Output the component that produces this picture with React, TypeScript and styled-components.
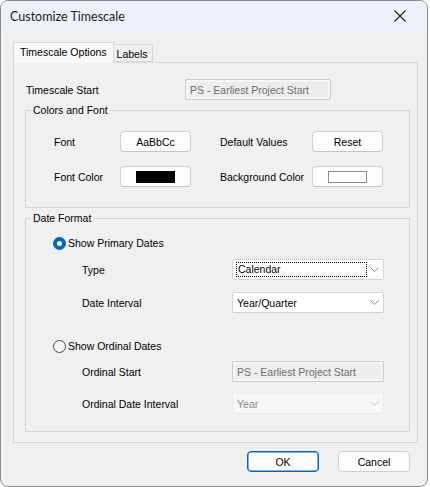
import { createGlobalStyle, styled } from 'styled-components';

const GlobalStyle = createGlobalStyle`
  html, body {
    margin: 0;
    padding: 0;
    background: #ffffff;
  }
  * {
    box-sizing: border-box;
  }
`;

export default function App() {
  return (
    <>
      <GlobalStyle />
      <Window>
        <TitleBar>
          <Title>Customize Timescale</Title>
          <CloseButton aria-label="Close">
            <svg width="12" height="12" viewBox="0 0 12 12">
              <path d="M0.5 0.5 L11.5 11.5 M11.5 0.5 L0.5 11.5" stroke="#1b1b1b" strokeWidth="1.1" />
            </svg>
          </CloseButton>
        </TitleBar>

        <Body>
          <TabStrip>
            <Tab $active>Timescale Options</Tab>
            <Tab>Labels</Tab>
          </TabStrip>

          <Panel>
            <StartRow>
              <StartLabel>Timescale Start</StartLabel>
              <TextField $width={146}>PS - Earliest Project Start</TextField>
            </StartRow>

            <Group $top={4}>
              <Legend>Colors and Font</Legend>
              <ColorGrid>
                <Label>Font</Label>
                <PushButton>AaBbCc</PushButton>
                <Label>Default Values</Label>
                <PushButton>Reset</PushButton>
                <Label>Font Color</Label>
                <PushButton>
                  <Swatch $color="#000000" $border="#000000" />
                </PushButton>
                <Label>Background Color</Label>
                <PushButton>
                  <Swatch $color="#ffffff" $border="#8a8a8a" />
                </PushButton>
              </ColorGrid>
            </Group>

            <Group $top={4}>
              <Legend>Date Format</Legend>
              <DateBody>
                <RadioRow $top={0}>
                  <Radio $checked />
                  <span>Show Primary Dates</span>
                </RadioRow>
                <FieldRow $top={9}>
                  <Label>Type</Label>
                  <Combo>
                    <FocusText>Calendar</FocusText>
                    <Chevron />
                  </Combo>
                </FieldRow>
                <FieldRow $top={12}>
                  <Label>Date Interval</Label>
                  <Combo>
                    <ComboText>Year/Quarter</ComboText>
                    <Chevron />
                  </Combo>
                </FieldRow>

                <RadioRow $top={26}>
                  <Radio />
                  <span>Show Ordinal Dates</span>
                </RadioRow>
                <FieldRow $top={8}>
                  <Label>Ordinal Start</Label>
                  <TextField $width={152}>PS - Earliest Project Start</TextField>
                </FieldRow>
                <FieldRow $top={11}>
                  <Label>Ordinal Date Interval</Label>
                  <Combo $disabled>
                    <ComboText>Year</ComboText>
                    <Chevron $disabled />
                  </Combo>
                </FieldRow>
              </DateBody>
            </Group>
          </Panel>

          <Footer>
            <DialogButton $default>OK</DialogButton>
            <DialogButton>Cancel</DialogButton>
          </Footer>
        </Body>
      </Window>
    </>
  );
}

function Chevron({ $disabled }: { $disabled?: boolean }) {
  return (
    <ChevronIcon width="9" height="5" viewBox="0 0 9 5">
      <path d="M0.5 0.5 L4.5 4.5 L8.5 0.5" fill="none" stroke={$disabled ? '#c4c4c4' : '#8a8a8a'} strokeWidth="1" />
    </ChevronIcon>
  );
}

const Window = styled.div`
  width: 428px;
  height: 487px;
  display: flex;
  flex-direction: column;
  background: #f0f0f0;
  border: 1px solid #8d8d8d;
  border-radius: 8px;
  overflow: hidden;
  font-family: 'Liberation Sans', Arial, sans-serif;
  font-size: 10.5px;
  color: #000;
`;

const TitleBar = styled.div`
  height: 30px;
  flex: none;
  display: flex;
  align-items: center;
  justify-content: space-between;
  padding-left: 9px;
  padding-right: 4px;
  background: #eef2f8;
`;

const Title = styled.div`
  font-family: Lato, 'Noto Sans', sans-serif;
  font-size: 12.5px;
  color: #1a1a1a;
`;

const CloseButton = styled.div`
  width: 46px;
  height: 30px;
  display: flex;
  align-items: center;
  justify-content: center;
`;

const Body = styled.div`
  display: flex;
  flex-direction: column;
  padding: 11px 9px 0 12px;
`;

const TabStrip = styled.div`
  display: flex;
  align-items: flex-end;
  height: 20px;
`;

const Tab = styled.div<{ $active?: boolean }>`
  height: ${(p) => (p.$active ? '21px' : '18px')};
  margin-bottom: ${(p) => (p.$active ? '-1px' : '0')};
  padding: ${(p) => (p.$active ? '3px 6px 0 6px' : '3px 4px 0 3px')};
  background: ${(p) => (p.$active ? '#f9f9f9' : '#f0f0f0')};
  border: 1px solid #d9d9d9;
  border-bottom: ${(p) => (p.$active ? 'none' : '1px solid #d9d9d9')};
  border-left: ${(p) => (p.$active ? '1px solid #d9d9d9' : 'none')};
  position: relative;
  z-index: ${(p) => (p.$active ? 1 : 0)};
  line-height: 13px;
  white-space: nowrap;
`;

const Panel = styled.div`
  display: flex;
  flex-direction: column;
  border: 1px solid #dadada;
  padding: 16px 7px 10px 11px;
`;

const StartRow = styled.div`
  display: flex;
  align-items: center;
  padding-left: 1px;
`;

const StartLabel = styled.div`
  width: 159px;
`;

const Label = styled.div`
  white-space: nowrap;
`;

const TextField = styled.div<{ $width: number }>`
  width: ${(p) => p.$width}px;
  height: 21px;
  display: flex;
  align-items: center;
  padding-left: 4px;
  color: #6d6d6d;
  background: #ededed;
  border: 1px solid #cdcdcd;
  box-shadow: inset 0 0 0 2px #f6f6f6;
  border-radius: 2px;
  white-space: nowrap;
`;

const Group = styled.fieldset<{ $top: number }>`
  margin: ${(p) => p.$top}px 0 0 0;
  padding: 0;
  min-width: 0;
  border: 1px solid #d7d7d7;
`;

const Legend = styled.legend`
  margin-left: 5px;
  padding: 0 2px;
  line-height: 13px;
`;

const ColorGrid = styled.div`
  display: grid;
  grid-template-columns: 66px 100px 92px 71px;
  grid-auto-rows: 21px;
  row-gap: 14px;
  align-items: center;
  padding: 14px 0 20px 28px;
`;

const PushButton = styled.div`
  width: 71px;
  height: 21px;
  display: flex;
  align-items: center;
  justify-content: center;
  background: #fdfdfd;
  border: 1px solid #d0d0d0;
  border-bottom-color: #c4c4c4;
  border-radius: 4px;
`;

const Swatch = styled.div<{ $color: string; $border: string }>`
  width: 39px;
  height: 12px;
  background: ${(p) => p.$color};
  border: 1px solid ${(p) => p.$border};
`;

const DateBody = styled.div`
  display: flex;
  flex-direction: column;
  padding: 11px 0 17px 27px;
`;

const RadioRow = styled.div<{ $top: number }>`
  margin-top: ${(p) => p.$top}px;
  height: 14px;
  display: flex;
  align-items: center;
  gap: 2px;
`;

const Radio = styled.div<{ $checked?: boolean }>`
  width: 13px;
  height: 13px;
  border-radius: 50%;
  flex: none;
  display: flex;
  align-items: center;
  justify-content: center;
  background: ${(p) => (p.$checked ? '#0067c0' : '#f5f5f5')};
  border: 1px solid ${(p) => (p.$checked ? '#0067c0' : '#4a4a4a')};
  &::after {
    content: '';
    display: ${(p) => (p.$checked ? 'block' : 'none')};
    width: 5px;
    height: 5px;
    border-radius: 50%;
    background: #ffffff;
  }
`;

const FieldRow = styled.div<{ $top: number }>`
  margin-top: ${(p) => p.$top}px;
  display: grid;
  grid-template-columns: 150px 152px;
  align-items: center;
  padding-left: 29px;
`;

const Combo = styled.div<{ $disabled?: boolean }>`
  height: 21px;
  display: flex;
  align-items: center;
  justify-content: space-between;
  padding: 0 4px 0 3px;
  background: ${(p) => (p.$disabled ? '#f6f6f6' : '#ffffff')};
  border: 1px solid ${(p) => (p.$disabled ? '#ebebeb' : '#d3d3d3')};
  border-radius: 2px;
  color: ${(p) => (p.$disabled ? '#8a8a8a' : '#000')};
`;

const ComboText = styled.span`
  padding-left: 1px;
`;

const FocusText = styled.span`
  width: 131px;
  height: 15px;
  line-height: 13px;
  padding-left: 1px;
  border: 1px dotted #000;
`;

const ChevronIcon = styled.svg`
  flex: none;
`;

const Footer = styled.div`
  display: flex;
  justify-content: flex-end;
  gap: 19px;
  margin-top: 8px;
  padding-right: 8px;
`;

const DialogButton = styled.div<{ $default?: boolean }>`
  width: 72px;
  height: 21px;
  display: flex;
  align-items: center;
  justify-content: center;
  background: #fdfdfd;
  border: 1px solid ${(p) => (p.$default ? '#0067c0' : '#d0d0d0')};
  border-radius: 4px;
  box-shadow: ${(p) => (p.$default ? 'inset 0 0 0 0.5px #0067c0' : 'none')};
`;
